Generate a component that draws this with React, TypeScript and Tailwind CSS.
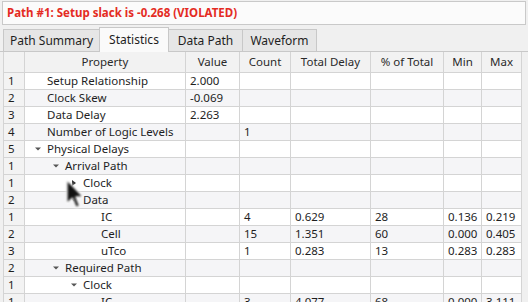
import React from 'react';

type Row = {
  idx: string;
  label: string;
  level: number;
  toggle?: 'open' | 'closed';
  value?: string;
  count?: string;
  total?: string;
  pct?: string;
  min?: string;
  max?: string;
};

const rows: Row[] = [
  { idx: '1', label: 'Setup Relationship', level: 0, value: '2.000' },
  { idx: '2', label: 'Clock Skew', level: 0, value: '-0.069' },
  { idx: '3', label: 'Data Delay', level: 0, value: '2.263' },
  { idx: '4', label: 'Number of Logic Levels', level: 0, count: '1' },
  { idx: '5', label: 'Physical Delays', level: 0, toggle: 'open' },
  { idx: '1', label: 'Arrival Path', level: 1, toggle: 'open' },
  { idx: '1', label: 'Clock', level: 2, toggle: 'closed' },
  { idx: '2', label: 'Data', level: 2, toggle: 'open' },
  { idx: '1', label: 'IC', level: 3, count: '4', total: '0.629', pct: '28', min: '0.136', max: '0.219' },
  { idx: '2', label: 'Cell', level: 3, count: '15', total: '1.351', pct: '60', min: '0.000', max: '0.405' },
  { idx: '3', label: 'uTco', level: 3, count: '1', total: '0.283', pct: '13', min: '0.283', max: '0.283' },
  { idx: '2', label: 'Required Path', level: 1, toggle: 'open' },
  { idx: '1', label: 'Clock', level: 2, toggle: 'open' },
  { idx: '1', label: 'IC', level: 3, count: '3', total: '4.077', pct: '68', min: '0.000', max: '3.111' },
];

const tabs = ['Path Summary', 'Statistics', 'Data Path', 'Waveform'];
const tabWidths = ['w-[97px]', 'w-[70px]', 'w-[75px]', 'w-[75px]'];

function Toggle({ kind }: { kind: 'open' | 'closed' }) {
  if (kind === 'closed') {
    return (
      <svg width="8" height="8" viewBox="0 0 8 8" className="shrink-0">
        <path d="M2 1 L6 4 L2 7 Z" fill="#333" />
      </svg>
    );
  }
  return (
    <svg width="8" height="8" viewBox="0 0 8 8" className="shrink-0">
      <path d="M1 2.5 L7 2.5 L4 5.5 Z" fill="#555" />
    </svg>
  );
}

const cell = 'border-r border-b border-[#d4d4d4] px-[4px] whitespace-nowrap overflow-hidden';

export default function App() {
  return (
    <div
      className="relative w-[528px] h-[302px] overflow-hidden bg-[#f0f0f0] text-[#1e1e1e]"
      style={{ fontFamily: '"Noto Sans", "Open Sans", sans-serif' }}
    >
      <div className="h-[24px] mx-[2px] mt-[1px] border border-[#c9c9c9] bg-[#fbfbfb] flex items-center px-[4px]">
        <span className="text-[11.5px] font-bold text-[#e42b23] leading-none">
          Path #1: Setup slack is -0.268 (VIOLATED)
        </span>
      </div>

      <div className="flex items-end h-[27px] pl-[3px] border-b border-[#c8c8c8]">
        {tabs.map((t, i) => (
          <div
            key={t}
            className={`${tabWidths[i]} flex items-center justify-center text-[12px] border border-b-0 border-[#c8c8c8] -ml-px first:ml-0 ${
              i === 1 ? 'h-[25px] bg-[#fafafa] relative z-10 -mb-px' : 'h-[22px] bg-[#e6e6e6]'
            }`}
          >
            {t}
          </div>
        ))}
      </div>

      <div className="pl-[3px]">
        <table className="table-fixed border-collapse text-[11.5px] border-l border-[#d4d4d4]" style={{ width: 518 }}>
          <colgroup>
            <col className="w-[21px]" />
            <col className="w-[161px]" />
            <col className="w-[54px]" />
            <col className="w-[51px]" />
            <col className="w-[80px]" />
            <col className="w-[73px]" />
            <col className="w-[38px]" />
            <col className="w-[40px]" />
          </colgroup>
          <thead>
            <tr className="h-[20px] bg-[#f2f2f2] text-[#2a2a2a]">
              <th className={cell}></th>
              <th className={`${cell} font-normal text-center`}>Property</th>
              <th className={`${cell} font-normal text-center`}>Value</th>
              <th className={`${cell} font-normal text-center`}>Count</th>
              <th className={`${cell} font-normal text-center`}>Total Delay</th>
              <th className={`${cell} font-normal text-center`}>% of Total</th>
              <th className={`${cell} font-normal text-center`}>Min</th>
              <th className={`${cell} font-normal text-center`}>Max</th>
            </tr>
          </thead>
          <tbody>
            {rows.map((r, i) => (
              <tr key={i} className={`h-[17px] leading-[16px] ${i % 2 === 1 ? 'bg-[#f5f5f7]' : 'bg-white'}`}>
                <td className={`${cell} bg-[#f3f3f3]`}>{r.idx}</td>
                <td className={cell}>
                  <div className="flex items-center" style={{ paddingLeft: 5 + r.level * 18 }}>
                    <span className="w-[13px] flex items-center">{r.toggle && <Toggle kind={r.toggle} />}</span>
                    <span>{r.label}</span>
                  </div>
                </td>
                <td className={cell}>{r.value}</td>
                <td className={cell}>{r.count}</td>
                <td className={cell}>{r.total}</td>
                <td className={cell}>{r.pct}</td>
                <td className={`${cell} px-[3px]`}>{r.min}</td>
                <td className={`${cell} px-[3px]`}>{r.max}</td>
              </tr>
            ))}
          </tbody>
        </table>
      </div>

      {/* mouse pointer */}
      <svg
        className="absolute left-[65px] top-[178px]"
        width="22"
        height="33"
        viewBox="0 0 18 27"
        style={{ filter: 'blur(0.8px)' }}
      >
        <path
          d="M1.5 1.5 L1.5 21 L6 16.5 L9 24 L12 22.8 L9 15.5 L15 15.5 Z"
          fill="#111"
          stroke="#fff"
          strokeWidth="1.2"
          strokeLinejoin="round"
        />
      </svg>
    </div>
  );
}
